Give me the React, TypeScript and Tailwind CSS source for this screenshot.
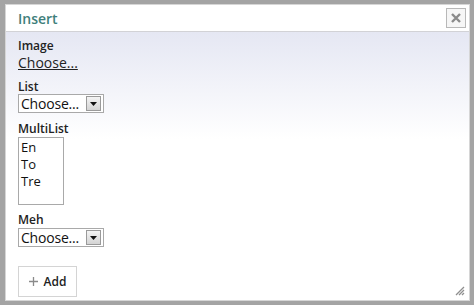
import React from "react";

const font = { fontFamily: '"Open Sans", "Noto Sans", sans-serif' };

function Select() {
  return (
    <div className="flex h-[19px] w-[86px] items-center border border-[#a9a9a9] bg-white pl-[2px] pr-[2px]">
      <span className="flex-1 text-[14px] leading-none tracking-[-0.2px] text-[#111]">Choose...</span>
      <span className="flex h-[15px] w-[15px] items-center justify-center border border-[#9a9a9a] bg-gradient-to-b from-[#f4f4f4] to-[#d4d4d4]">
        <svg width="7" height="4" viewBox="0 0 7 4">
          <path d="M0 0h7L3.5 4z" fill="#111" />
        </svg>
      </span>
    </div>
  );
}

export default function App() {
  return (
    <div
      className="flex h-[305px] w-[474px] flex-col bg-[#a4a4a4] pb-[4px] pl-[5px] pr-[4px] pt-[4px]"
      style={font}
    >
      <div className="flex flex-1 flex-col border border-[#d6d6d6] bg-white">
        <div className="flex h-[27px] items-center justify-between border-b border-[#d2d2d6] pl-[12px] pr-[3px]">
          <span className="text-[14px] font-semibold text-[#3f807b]">Insert</span>
          <button className="flex h-[20px] w-[20px] items-center justify-center border border-[#b8b8b8] bg-[#f6f6f6]">
            <svg width="10" height="10" viewBox="0 0 10 10">
              <path d="M1 1l8 8M9 1l-8 8" stroke="#8a8a8a" strokeWidth="2.4" />
            </svg>
          </button>
        </div>
        <div className="relative flex flex-1 flex-col bg-gradient-to-b from-[#e5e7f3] via-white via-[40%] to-white pl-[12px] pt-[6px] text-[#222]">
          <div className="text-[12px] font-semibold leading-[15px]">Image</div>
          <div className="mt-[1px] text-[14px] leading-[18px] underline">Choose...</div>
          <div className="mt-[8px] text-[12px] font-semibold leading-[14px]">List</div>
          <Select />
          <div className="mt-[8px] text-[12px] font-semibold leading-[15px]">MultiList</div>
          <div className="mt-[1px] flex h-[68px] w-[46px] flex-col border border-[#a9a9a9] bg-white pl-[2px] pt-[1px] text-[13px] leading-[17px] text-[#111]">
            <span>En</span>
            <span>To</span>
            <span>Tre</span>
          </div>
          <div className="mt-[7px] text-[12px] font-semibold leading-[15px]">Meh</div>
          <div className="mt-[1px]">
            <Select />
          </div>
          <button className="mt-[19px] flex h-[31px] w-[59px] items-center justify-center gap-[6px] border border-[#d4d4d4] bg-white text-[12px] font-semibold text-[#222]">
            <svg width="9" height="9" viewBox="0 0 9 9">
              <path d="M4.5 0v9M0 4.5h9" stroke="#8a8a8a" strokeWidth="1.3" />
            </svg>
            Add
          </button>
          <svg className="absolute bottom-[4px] right-[4px]" width="12" height="12" viewBox="0 0 12 12">
            <path d="M11 3L3 11M11 6L6 11M11 9L9 11" stroke="#8f8f8f" strokeWidth="1.3" />
          </svg>
        </div>
      </div>
    </div>
  );
}
